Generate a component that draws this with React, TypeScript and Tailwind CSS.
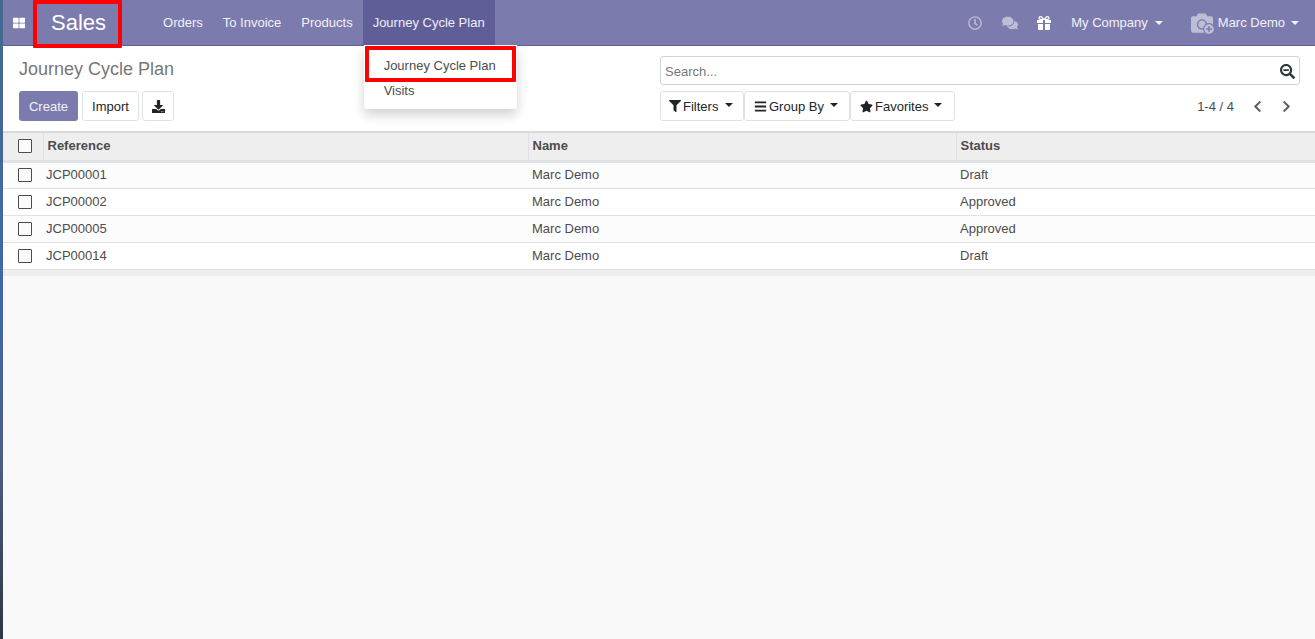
import React from "react";
import { FaThLarge, FaRegClock, FaComments, FaCamera, FaPlusCircle, FaFilter, FaBars, FaStar, FaDownload, FaSearchMinus, FaChevronLeft, FaChevronRight } from "react-icons/fa";

const Caret = ({ className = "" }: { className?: string }) => (
  <span className={`inline-block w-0 h-0 border-x-[4px] border-x-transparent border-t-[4px] border-t-current ${className}`} />
);

const Check = () => (
  <span className="block w-[14px] h-[14px] border-[1.5px] border-[#4c4c4c] bg-[#fbfbfb] rounded-[1px]" />
);

const Gift = () => (
  <svg width="14" height="14" viewBox="0 0 14 14" fill="currentColor">
    <path d="M0 4h6v3H0zM8 4h6v3H8zM1 8h5v6H2a1 1 0 0 1-1-1zM8 8h5v5a1 1 0 0 1-1 1H8z" />
    <path fillRule="evenodd" d="M3.6 0C5.2 0 6.3 1.5 7 3c.7-1.500 1.800-3 3.400-3C11.800 0 12.500 1 12.500 1.900 12.500 3 11.600 4 10 4H4C2.400 4 1.500 3 1.500 1.900 1.500 1 2.200 0 3.600 0zM3.500 1.300c-.5 0-.8.3-.8.7 0 .4.400.8 1.300.8h1.500C5 2 4.300 1.300 3.500 1.300zM10.500 1.300c-.8 0-1.500.7-2 1.500H10c.9 0 1.300-.4 1.300-.8 0-.4-.3-.7-.8-.7z" />
  </svg>
);

const rows = [
  ["JCP00001", "Marc Demo", "Draft"],
  ["JCP00002", "Marc Demo", "Approved"],
  ["JCP00005", "Marc Demo", "Approved"],
  ["JCP00014", "Marc Demo", "Draft"],
];

const FilterBtn = ({ icon, label, w, gap, pad, caret }: { icon: React.ReactNode; label: string; w: string; gap: string; pad: string; caret: string }) => (
  <button className={`h-[30px] ${w} ${pad} flex items-center bg-white border border-[#dee2e6] rounded-[3px] text-[#212529]`}>
    {icon}
    <span className={`${gap} pt-[1px]`}>{label}</span>
    <Caret className={`${caret} -mt-[3px]`} />
  </button>
);

export default function App() {
  return (
    <div className="flex h-[639px] overflow-hidden font-['Liberation_Sans',Arial,sans-serif] text-[13px] text-[#4c4c4c]">
      <div className="w-[3px] shrink-0 bg-[linear-gradient(180deg,#46688e_0%,#4068a8_48%,#4d5f80_72%,#2d3644_100%)]" />
      <div className="flex-1 min-w-0 flex flex-col bg-[#f9f9f9]">
        <nav className="h-[46px] shrink-0 flex items-stretch bg-[#7c7bad] border-b border-[#5f5e97] text-white/90">
          <div className="w-[30px] flex items-center justify-center text-white">
            <FaThLarge size={12} className="ml-[2px]" />
          </div>
          <div className="relative flex items-center ml-[18px] mr-[47px] text-[22px] text-white">
            Sales
            <div className="absolute left-[-18px] top-0 w-[89px] h-[48px] border-[4px] border-[#ff0000] rounded-[1px]" />
          </div>
          <div className="flex items-center px-[10px]">Orders</div>
          <div className="flex items-center px-[10px]">To Invoice</div>
          <div className="flex items-center px-[10px]">Products</div>
          <div className="relative flex items-center px-[10px] bg-[#5f5e97]">
            Journey Cycle Plan
            <div className="absolute z-10 left-[1px] top-[45px] w-[153px] h-[64px] bg-white rounded-b-[3px] shadow-[0_6px_12px_rgba(0,0,0,0.18)] text-[#4c4c4c] pt-[8px]">
              <div className="pl-[20px] h-[25px] flex items-center">Journey Cycle Plan</div>
              <div className="pl-[20px] h-[25px] flex items-center">Visits</div>
              <div className="absolute left-[1px] top-[1px] w-[151px] h-[36px] border-[4px] border-[#ff0000] rounded-[1px]" />
            </div>
          </div>
          <div className="flex-1" />
          <div className="flex items-center w-[14px] text-white/50"><FaRegClock size={14} /></div>
          <div className="flex items-center ml-[20px] text-white/50"><FaComments size={16} /></div>
          <div className="flex items-center ml-[19px] text-white"><Gift /></div>
          <div className="flex items-center ml-[20px]">My Company<Caret className="ml-[7px]" /></div>
          <div className="relative flex items-center ml-[28px] text-white/50">
            <FaCamera size={22} />
            <span className="absolute left-[12px] top-[23px] bg-[#7c7bad] rounded-full p-[1px]"><FaPlusCircle size={10} /></span>
          </div>
          <div className="flex items-center ml-[5px] mr-[16px]">Marc Demo<Caret className="ml-[6px]" /></div>
        </nav>

        <div className="h-[85px] shrink-0 bg-white flex pl-[16px] pr-[15px]">
          <div className="w-[641px] shrink-0">
            <div className="mt-[13px] h-[21px] leading-[21px] text-[18px] text-[#777777]">Journey Cycle Plan</div>
            <div className="mt-[11px] flex">
              <button className="h-[30px] w-[59px] pt-[1px] bg-[#7c7bad] text-white/90 rounded-[3px]">Create</button>
              <button className="h-[30px] w-[57px] pt-[1px] ml-[4px] bg-white text-[#212529] border border-[#dee2e6] rounded-[3px]">Import</button>
              <button className="h-[30px] w-[32px] ml-[3px] bg-white text-[#212529] border border-[#dee2e6] rounded-[3px] flex items-center justify-center"><FaDownload size={13} /></button>
            </div>
          </div>
          <div className="flex-1 min-w-0">
            <div className="mt-[10px] h-[29px] border border-[#ced4da] rounded-[3px] flex items-center justify-between pl-[4px] pr-[4px] text-[#777777]">
              <span className="pt-[2px]">Search...</span>
              <FaSearchMinus size={15} className="text-[#2b3a42] mt-[1px]" />
            </div>
            <div className="mt-[6px] flex items-center">
              <FilterBtn icon={<FaFilter size={12} />} label="Filters" w="w-[84px]" gap="ml-[2px]" pad="pl-[8px]" caret="ml-[7px]" />
              <FilterBtn icon={<FaBars size={13} />} label="Group By" w="w-[106px]" gap="ml-[2px]" pad="pl-[9px]" caret="ml-[6px]" />
              <FilterBtn icon={<FaStar size={13} />} label="Favorites" w="w-[105px]" gap="ml-[2px]" pad="pl-[9px]" caret="ml-[6px]" />
              <div className="flex-1" />
              <span className="text-[#4c4c4c] pt-[1px]">1-4 / 4</span>
              <FaChevronLeft size={13} className="ml-[17px] text-[#5f5f5f]" />
              <FaChevronRight size={13} className="ml-[16px] mr-[7px] text-[#5f5f5f]" />
            </div>
          </div>
        </div>

        <table className="w-full table-fixed border-collapse bg-white">
          <colgroup>
            <col className="w-[40px]" />
            <col className="w-[485px]" />
            <col className="w-[428px]" />
            <col />
          </colgroup>
          <thead>
            <tr className="h-[29px] bg-[#eeeeee] border-t-2 border-t-[#d8d8d8] border-b-[3px] border-b-[#dee2e6] font-bold text-left">
              <th className="pl-[15px]"><Check /></th>
              <th className="pl-[4px] pb-[2px] border-l border-[#dee2e6]">Reference</th>
              <th className="pl-[4px] pb-[2px] border-l border-[#dee2e6]">Name</th>
              <th className="pl-[4px] pb-[2px] border-l border-[#dee2e6]">Status</th>
            </tr>
          </thead>
          <tbody>
            {rows.map((r, i) => (
              <tr key={r[0]} className={`h-[27px] border-b border-[#dee2e6] ${i % 2 === 0 ? "bg-[#fcfcfc]" : "bg-white"}`}>
                <td className="pl-[15px]"><Check /></td>
                <td className="pl-[3px]">{r[0]}</td>
                <td className="pl-[4px]">{r[1]}</td>
                <td className="pl-[4px]">{r[2]}</td>
              </tr>
            ))}
          </tbody>
          <tfoot>
            <tr className="h-[7px] bg-[#eeeeee]"><td colSpan={4} /></tr>
          </tfoot>
        </table>
      </div>
    </div>
  );
}
